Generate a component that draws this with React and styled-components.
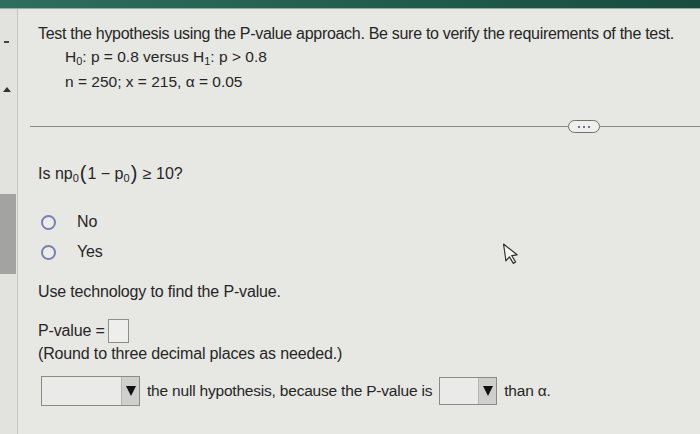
import React from "react";
import styled, { createGlobalStyle } from "styled-components";

const Global = createGlobalStyle`
  html, body { margin: 0; padding: 0; }
  body {
    width: 700px; height: 434px; overflow: hidden;
    background: #e6e6e3;
    font-family: "Liberation Sans", Arial, sans-serif;
    color: #262626;
  }
`;

const Page = styled.div`
  position: relative;
  width: 700px;
  height: 434px;
  display: flex;
  flex-direction: column;
  background: #e7e7e4;
`;

const TopBar = styled.div`
  height: 8px;
  background: linear-gradient(90deg, #2e6e5e 0%, #1f5b4b 60%, #184c3f 100%);
  border-bottom: 1px solid #9aa9a4;
`;

const Body = styled.div`
  flex: 1;
  display: flex;
`;

const Gutter = styled.div`
  width: 17px;
  border-right: 1px solid #c4c4c1;
  background: #e2e2df;
  display: flex;
  flex-direction: column;
  align-items: center;
`;

const Dash = styled.div`
  width: 5px;
  height: 2px;
  background: #444;
  margin-top: 32px;
  margin-left: -4px;
`;

const UpArrow = styled.div`
  width: 0;
  height: 0;
  border-left: 4px solid transparent;
  border-right: 4px solid transparent;
  border-bottom: 5px solid #333;
  margin-top: 44px;
  margin-left: -4px;
`;

const Thumb = styled.div`
  align-self: stretch;
  height: 80px;
  margin-top: 102px;
  margin-right: 1px;
  background: #a3a3a1;
`;

const Main = styled.div`
  flex: 1;
  display: flex;
  flex-direction: column;
`;

const Prompt = styled.div`
  padding: 15px 0 0 20px;
  font-size: 16px;
  line-height: 20px;
`;

const Lead = styled.div`
  white-space: nowrap;
  letter-spacing: -0.3px;
`;

const Indent = styled.div`
  margin-left: 27px;
  line-height: 25px;
  font-size: 15.5px;
`;

const Sub = styled.sub`
  font-size: 11px;
  vertical-align: -3px;
  line-height: 0;
`;

const DividerRow = styled.div`
  margin-top: 26px;
  margin-left: 12px;
  display: flex;
  align-items: center;
`;

const Line = styled.div`
  flex: ${(p) => p.$grow || 1};
  height: 1px;
  background: #8a8a88;
`;

const MoreButton = styled.div`
  width: 30px;
  height: 11px;
  border: 1.5px solid #707070;
  border-radius: 7px;
  background: #efefed;
  display: flex;
  align-items: center;
  justify-content: center;
  gap: 3px;
`;

const Dot = styled.span`
  width: 2px;
  height: 2px;
  border-radius: 50%;
  background: #3a4a70;
`;

const Content = styled.div`
  padding-left: 20px;
  font-size: 16px;
  letter-spacing: -0.15px;
`;

const Question = styled.div`
  margin-top: 30px;
  line-height: 20px;
  letter-spacing: 0;
`;

const Paren = styled.span`
  font-size: 20px;
  vertical-align: -1px;
  margin: 0 1px;
`;

const Options = styled.div`
  margin-top: 28px;
  margin-left: 3px;
  display: flex;
  flex-direction: column;
  gap: 10px;
`;

const Option = styled.label`
  display: flex;
  align-items: center;
  height: 20px;
  gap: 21px;
`;

const Radio = styled.span`
  width: 11px;
  height: 11px;
  border-radius: 50%;
  border: 2px solid #7a80b4;
  background: #ececea;
`;

const Para = styled.div`
  margin-top: ${(p) => p.$mt || 0}px;
  line-height: ${(p) => p.$lh || 20}px;
  display: flex;
  align-items: center;
`;

const AnswerBox = styled.span`
  display: inline-block;
  width: 19px;
  height: 22px;
  border: 1px solid #8e8e8c;
  background: #eeeeec;
  margin-left: 3px;
`;

const SentenceRow = styled.div`
  margin-top: 12px;
  margin-left: 3px;
  display: flex;
  align-items: center;
  gap: 7px;
  font-size: 15.5px;
  letter-spacing: -0.2px;
`;

const Select = styled.div`
  width: ${(p) => p.$w}px;
  height: ${(p) => p.$h}px;
  border: 1px solid #8a8a88;
  background: #eaeae8;
  display: flex;
  justify-content: flex-end;
  box-sizing: border-box;
`;

const SelectArrow = styled.div`
  width: 17px;
  background: #cfcfcd;
  border-left: 1px solid #b5b5b3;
  display: flex;
  align-items: center;
  justify-content: center;
  &::after {
    content: "";
    border-left: 5px solid transparent;
    border-right: 5px solid transparent;
    border-top: 10px solid #111;
  }
`;

const Cursor = styled.svg`
  position: absolute;
  left: 504px;
  top: 242px;
  transform: rotate(-8deg);
`;

export default function App() {
  return (
    <>
      <Global />
      <Page>
        <TopBar />
        <Body>
          <Gutter>
            <Dash />
            <UpArrow />
            <Thumb />
          </Gutter>
          <Main>
            <Prompt>
              <Lead>
                Test the hypothesis using the P-value approach. Be sure to verify the requirements of the test.
              </Lead>
              <Indent>
                H<Sub>0</Sub>: p = 0.8 versus H<Sub>1</Sub>: p &gt; 0.8
              </Indent>
              <Indent>n = 250; x = 215, α = 0.05</Indent>
            </Prompt>
            <DividerRow>
              <Line $grow={538} />
              <MoreButton>
                <Dot />
                <Dot />
                <Dot />
              </MoreButton>
              <Line $grow={100} />
            </DividerRow>
            <Content>
              <Question>
                Is np<Sub>0</Sub>
                <Paren>(</Paren>1 − p<Sub>0</Sub>
                <Paren>)</Paren> ≥ 10?
              </Question>
              <Options>
                <Option>
                  <Radio />
                  No
                </Option>
                <Option>
                  <Radio />
                  Yes
                </Option>
              </Options>
              <Para $mt={20}>Use technology to find the P-value.</Para>
              <Para $mt={16} $lh={26}>
                P-value =<AnswerBox />
              </Para>
              <Para $mt={0}>(Round to three decimal places as needed.)</Para>
              <SentenceRow>
                <Select $w={99} $h={30}>
                  <SelectArrow />
                </Select>
                <span>the null hypothesis, because the P-value is</span>
                <Select $w={58} $h={28}>
                  <SelectArrow />
                </Select>
                <span>than α.</span>
              </SentenceRow>
            </Content>
          </Main>
        </Body>
        <Cursor width="16" height="24" viewBox="0 0 16 24">
          <path
            d="M1 1 L1 18 L5 14.5 L8 21.5 L10.5 20.5 L7.5 13.5 L13 13.5 Z"
            fill="#f4f4f2"
            stroke="#333"
            strokeWidth="1.2"
            strokeLinejoin="round"
          />
        </Cursor>
      </Page>
    </>
  );
}
